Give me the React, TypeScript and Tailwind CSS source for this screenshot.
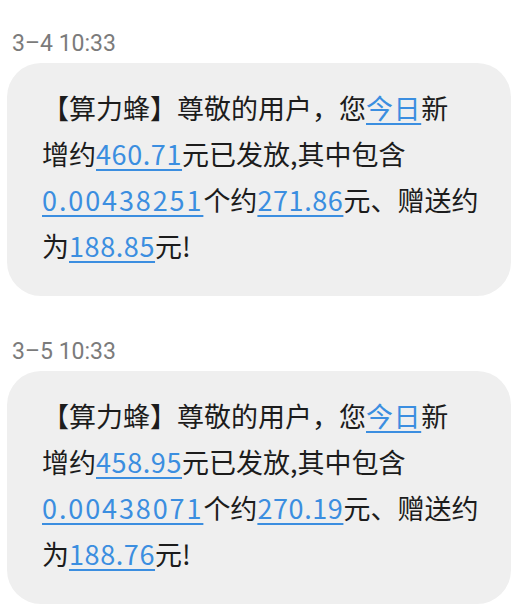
const messages = [
  {
    time: "3-4 10:33",
    total: "460.71",
    coin: "0.00438251",
    coinValue: "271.86",
    gift: "188.85",
  },
  {
    time: "3-5 10:33",
    total: "458.95",
    coin: "0.00438071",
    coinValue: "270.19",
    gift: "188.76",
  },
]

function Link({ children, wide }: { children: React.ReactNode; wide?: boolean }) {
  return (
    <span
      className={`text-[#3b8ee0] underline decoration-[#3b8ee0] decoration-[1.5px] underline-offset-[4px] ${
        wide ? "tracking-[1.9px]" : "tracking-[0.6px]"
      }`}
    >
      {children}
    </span>
  )
}

export default function App() {
  return (
    <div
      className="w-[512px] h-[605px] overflow-hidden bg-white"
      style={{ fontFamily: '"Noto Sans CJK SC", "Noto Sans", sans-serif' }}
    >
      {messages.map((m, i) => (
        <div key={i} className={i === 0 ? "pt-[30px]" : "pt-[42px]"}>
          <div
            className="pl-[12px] text-[23px] leading-[28px] text-[#7b7b7b]"
            style={{ fontFamily: 'Roboto, "Noto Sans", sans-serif' }}
          >
            {m.time.replace("-", "–")}
          </div>
          <div className="mt-[5px] ml-[7px] mr-[1px] rounded-[34px] bg-[#efefef] pl-[35px] pt-[22px] pb-[27px] text-[27px] leading-[46px] text-[#1c1c1c] whitespace-nowrap">
            <div>
              【算力蜂】尊敬的用户，您<Link>今日</Link>新
            </div>
            <div>
              增约<Link>{m.total}</Link>元已发放,其中包含
            </div>
            <div>
              <Link wide>{m.coin}</Link>个约<Link>{m.coinValue}</Link>元、赠送约
            </div>
            <div>
              为<Link>{m.gift}</Link>元!
            </div>
          </div>
        </div>
      ))}
    </div>
  )
}
